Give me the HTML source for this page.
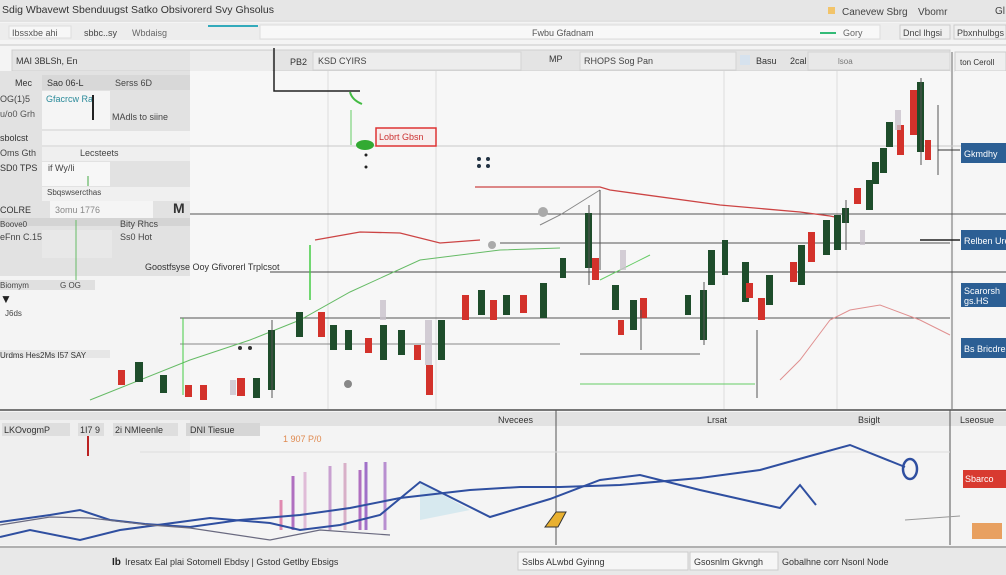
<!DOCTYPE html>
<html><head><meta charset="utf-8"><style>
body{margin:0;width:1006px;height:575px;overflow:hidden;background:#f3f3f3;font-family:"Liberation Sans",sans-serif;}
svg{display:block}
text{font-family:"Liberation Sans",sans-serif;}
</style></head><body>
<svg width="1006" height="575" viewBox="0 0 1006 575">
<rect width="1006" height="575" fill="#f4f4f4"/>
<rect x="0" y="0" width="1006" height="20" fill="#e6e6e6"/>
<text x="2" y="13" font-size="10.5" fill="#333">Sdig Wbavewt Sbenduugst Satko Obsivorerd Svy Ghsolus</text>
<rect x="828" y="7" width="7" height="7" fill="#f2c46a"/>
<text x="842" y="15" font-size="10" fill="#444">Canevew Sbrg</text>
<text x="918" y="15" font-size="10" fill="#444">Vbomr</text>
<text x="995" y="14" font-size="10" fill="#444">Gl</text>
<line x1="0" y1="21" x2="1006" y2="21" stroke="#cfcfcf"/>
<rect x="0" y="23" width="1006" height="17" fill="#ededed"/>
<rect x="9" y="26" width="62" height="12" fill="#f7f7f7" stroke="#ddd"/>
<text x="12" y="36" font-size="9" fill="#555">Ibssxbe ahi</text>
<text x="84" y="36" font-size="9" fill="#444">sbbc..sy</text>
<text x="132" y="36" font-size="9" fill="#666">Wbdaisg</text>
<line x1="208" y1="26" x2="258" y2="26" stroke="#33aabb" stroke-width="2"/>
<rect x="260" y="25" width="620" height="14" fill="#f8f8f8" stroke="#ddd"/>
<text x="532" y="36" font-size="9" fill="#555">Fwbu Gfadnam</text>
<line x1="820" y1="33" x2="836" y2="33" stroke="#33bb77" stroke-width="2"/>
<text x="843" y="36" font-size="9" fill="#666">Gory</text>
<rect x="900" y="25" width="50" height="14" fill="#f0f0f0" stroke="#ccc"/>
<text x="903" y="36" font-size="9" fill="#444">Dncl lhgsi</text>
<rect x="954" y="25" width="52" height="14" fill="#f0f0f0" stroke="#ccc"/>
<text x="957" y="36" font-size="9" fill="#444">Pbxnhulbgs</text>
<line x1="0" y1="45" x2="1006" y2="45" stroke="#c8c8c8"/>
<rect x="12" y="50" width="938" height="21" fill="#e4e4e4" stroke="#cfcfcf"/>
<text x="16" y="64" font-size="9" fill="#333">MAI 3BLSh, En</text>
<rect x="190" y="51" width="82" height="20" fill="#ececec"/>
<text x="290" y="65" font-size="9" fill="#333">PB2</text>
<rect x="313" y="52" width="208" height="18" fill="#ededed" stroke="#d4d4d4"/>
<text x="318" y="64" font-size="9" fill="#444">KSD CYIRS</text>
<text x="549" y="62" font-size="9" fill="#333">MP</text>
<rect x="580" y="52" width="156" height="18" fill="#ededed" stroke="#d4d4d4"/>
<text x="584" y="64" font-size="9" fill="#444">RHOPS Sog Pan</text>
<rect x="740" y="55" width="10" height="10" fill="#d6e2ee"/>
<text x="756" y="64" font-size="9" fill="#333">Basu</text>
<text x="790" y="64" font-size="9" fill="#333">2cal</text>
<rect x="808" y="52" width="142" height="18" fill="#e8e8e8" stroke="#d4d4d4"/>
<text x="838" y="64" font-size="8" fill="#777">lsoa</text>
<rect x="955" y="52" width="51" height="19" fill="#efefef" stroke="#ccc"/>
<text x="960" y="65" font-size="8" fill="#333">ton Ceroll</text>
<rect x="190" y="71" width="760" height="338" fill="#f7f7f7"/>
<rect x="955" y="71" width="51" height="338" fill="#f6f6f6"/>
<line x1="952" y1="52" x2="952" y2="410" stroke="#999" stroke-width="1.5"/>
<g stroke="#dcdcdc">
<line x1="328" y1="71" x2="328" y2="410"/><line x1="436" y1="71" x2="436" y2="410"/>
<line x1="724" y1="71" x2="724" y2="410"/><line x1="837" y1="71" x2="837" y2="410"/>
</g>
<line x1="190" y1="146" x2="1006" y2="146" stroke="#c8c8c8"/>
<line x1="190" y1="214" x2="1006" y2="214" stroke="#555"/>
<line x1="500" y1="243" x2="950" y2="243" stroke="#555"/>
<line x1="270" y1="272" x2="1006" y2="272" stroke="#444"/>
<line x1="180" y1="318" x2="950" y2="318" stroke="#555"/>
<line x1="180" y1="344" x2="560" y2="344" stroke="#888"/>
<rect x="0" y="71" width="190" height="205" fill="#e2e2e2"/>
<rect x="42" y="75" width="148" height="15" fill="#d8d8d8"/>
<text x="15" y="86" font-size="9" fill="#333">Mec</text>
<text x="47" y="86" font-size="9" fill="#333">Sao 06-L</text>
<text x="115" y="86" font-size="9" fill="#444">Serss 6D</text>
<rect x="42" y="91" width="68" height="38" fill="#f5f5f5"/>
<text x="0" y="102" font-size="9" fill="#444">OG(1)5</text>
<text x="46" y="102" font-size="9" fill="#2a8a9a">Gfacrcw Ra</text>
<line x1="93" y1="95" x2="93" y2="120" stroke="#222" stroke-width="2"/>
<text x="0" y="117" font-size="9" fill="#555">u/o0 Grh</text>
<text x="112" y="120" font-size="9" fill="#444">MAdls to siine</text>
<rect x="42" y="131" width="148" height="14" fill="#f3f3f3"/>
<text x="0" y="141" font-size="9" fill="#333">sbolcst</text>
<rect x="42" y="147" width="148" height="14" fill="#efefef"/>
<text x="0" y="156" font-size="9" fill="#444">Oms Gth</text>
<text x="80" y="156" font-size="9" fill="#444">Lecsteets</text>
<text x="0" y="171" font-size="9" fill="#333">SD0 TPS</text>
<rect x="42" y="162" width="68" height="24" fill="#f7f7f7"/>
<text x="48" y="171" font-size="9" fill="#444">if Wy/li</text>
<line x1="88" y1="176" x2="88" y2="186" stroke="#4a4" />
<rect x="42" y="187" width="148" height="14" fill="#f0f0f0"/>
<text x="47" y="195" font-size="8" fill="#444">Sbqswsercthas</text>
<text x="0" y="213" font-size="9" fill="#333">COLRE</text>
<rect x="50" y="201" width="103" height="17" fill="#f5f5f5"/>
<text x="55" y="213" font-size="9" fill="#888">3omu 1776</text>
<text x="173" y="213" font-size="14" font-weight="bold" fill="#333">M</text>
<rect x="0" y="218" width="190" height="8" fill="#d4d4d4"/>
<text x="0" y="227" font-size="8" fill="#444">Boove0</text>
<text x="120" y="227" font-size="9" fill="#444">Bity Rhcs</text>
<text x="0" y="240" font-size="9" fill="#444">eFnn C.15</text>
<text x="120" y="240" font-size="9" fill="#444">Ss0 Hot</text>
<rect x="42" y="230" width="70" height="28" fill="#e8e8e8"/>
<line x1="76" y1="220" x2="76" y2="290" stroke="#6b6" />
<text x="145" y="270" font-size="9" fill="#333">Goostfsyse Ooy Gfivorerl Trplcsot</text>
<rect x="0" y="280" width="95" height="10" fill="#e0e0e0"/>
<text x="0" y="288" font-size="8" fill="#444">Biomym</text>
<text x="60" y="288" font-size="8" fill="#444">G  OG</text>
<text x="0" y="303" font-size="12" fill="#222">&#9660;</text>
<text x="5" y="316" font-size="8" fill="#444">J6ds</text>
<rect x="0" y="350" width="110" height="8" fill="#e6e6e6"/>
<text x="0" y="358" font-size="8" fill="#333">Urdms Hes2Ms I57 SAY</text>
<path d="M274 48 V91 H360" stroke="#222" stroke-width="1.5" fill="none"/>
<path d="M350 92 Q352 100 362 104" stroke="#4b4" stroke-width="2" fill="none"/>
<line x1="351" y1="110" x2="351" y2="145" stroke="#6c6"/>
<ellipse cx="365" cy="145" rx="9" ry="5" fill="#3a3"/>
<rect x="376" y="128" width="60" height="18" fill="#f7eeee" stroke="#d33" stroke-width="1.5"/>
<text x="379" y="140" font-size="9" fill="#c33">Lobrt Gbsn</text>
<circle cx="366" cy="155" r="1.5" fill="#222"/><circle cx="366" cy="167" r="1.5" fill="#222"/>
<circle cx="479" cy="159" r="2" fill="#234"/><circle cx="488" cy="159" r="2" fill="#234"/>
<circle cx="479" cy="166" r="2" fill="#234"/><circle cx="488" cy="166" r="2" fill="#234"/>
<path d="M475 187 L600 187 L610 190 L720 205 L800 212 L830 216 L840 218" stroke="#c44" stroke-width="1.3" fill="none"/>
<path d="M315 240 L360 232 L400 233 L440 243 L480 240" stroke="#c44" stroke-width="1.3" fill="none"/>
<path d="M600 190 L560 215 L540 225" stroke="#888" fill="none"/>
<circle cx="543" cy="212" r="5" fill="#aaa"/>
<circle cx="492" cy="245" r="4" fill="#aaa"/>
<path d="M780 380 L800 360 L815 340 L830 320 L850 310 L880 305 L920 320 L950 335" stroke="#e09090" stroke-width="1" fill="none"/>
<line x1="580" y1="384" x2="755" y2="384" stroke="#6c6"/>
<line x1="580" y1="354" x2="700" y2="354" stroke="#666"/>
<line x1="600" y1="280" x2="650" y2="255" stroke="#6c6"/>
<path d="M90 400 L190 360 L250 340 L300 320 L350 292 L420 260 L500 250 L560 248" stroke="#6b6" stroke-width="1" fill="none"/>
<line x1="310" y1="245" x2="310" y2="300" stroke="#4c4" stroke-width="1.5"/>
<line x1="183" y1="318" x2="183" y2="395" stroke="#4c4"/>
<circle cx="240" cy="348" r="2" fill="#333"/><circle cx="250" cy="348" r="2" fill="#333"/>
<circle cx="348" cy="384" r="4" fill="#888"/>
<g>
<g fill="#1e4d2b">
<rect x="135" y="362" width="8" height="20"/><rect x="160" y="375" width="7" height="18"/>
<rect x="253" y="378" width="7" height="20"/><rect x="268" y="330" width="7" height="60"/>
<rect x="296" y="312" width="7" height="25"/><rect x="330" y="325" width="7" height="25"/>
<rect x="345" y="330" width="7" height="20"/><rect x="380" y="325" width="7" height="35"/>
<rect x="398" y="330" width="7" height="25"/><rect x="438" y="320" width="7" height="40"/>
<rect x="478" y="290" width="7" height="25"/><rect x="503" y="295" width="7" height="20"/>
<rect x="540" y="283" width="7" height="35"/><rect x="585" y="213" width="7" height="55"/>
<rect x="612" y="285" width="7" height="25"/><rect x="630" y="300" width="7" height="30"/>
<rect x="700" y="290" width="7" height="50"/><rect x="708" y="250" width="7" height="35"/>
<rect x="742" y="262" width="7" height="40"/><rect x="766" y="275" width="7" height="30"/>
<rect x="798" y="245" width="7" height="40"/><rect x="823" y="220" width="7" height="35"/>
<rect x="834" y="215" width="7" height="35"/><rect x="842" y="208" width="7" height="15"/>
<rect x="866" y="180" width="7" height="30"/><rect x="872" y="162" width="7" height="22"/>
<rect x="880" y="148" width="7" height="25"/><rect x="886" y="122" width="7" height="25"/>
<rect x="917" y="82" width="7" height="70"/><rect x="560" y="258" width="6" height="20"/>
<rect x="685" y="295" width="6" height="20"/><rect x="722" y="240" width="6" height="35"/>
</g>
<g fill="#d3322b">
<rect x="118" y="370" width="7" height="15"/><rect x="185" y="385" width="7" height="12"/>
<rect x="200" y="385" width="7" height="15"/><rect x="237" y="378" width="8" height="18"/>
<rect x="318" y="312" width="7" height="25"/><rect x="365" y="338" width="7" height="15"/>
<rect x="414" y="345" width="7" height="15"/><rect x="426" y="365" width="7" height="30"/>
<rect x="462" y="295" width="7" height="25"/><rect x="490" y="300" width="7" height="20"/>
<rect x="520" y="295" width="7" height="18"/><rect x="592" y="258" width="7" height="22"/>
<rect x="640" y="298" width="7" height="20"/><rect x="746" y="283" width="7" height="15"/>
<rect x="758" y="298" width="7" height="22"/><rect x="790" y="262" width="7" height="20"/>
<rect x="808" y="232" width="7" height="30"/><rect x="854" y="188" width="7" height="16"/>
<rect x="897" y="125" width="7" height="30"/><rect x="910" y="90" width="7" height="45"/>
<rect x="925" y="140" width="6" height="20"/><rect x="618" y="320" width="6" height="15"/>
</g>
<g fill="#c9c2cc" opacity=".8">
<rect x="425" y="320" width="7" height="45"/><rect x="620" y="250" width="6" height="20"/>
<rect x="895" y="110" width="6" height="20"/><rect x="860" y="230" width="5" height="15"/>
<rect x="230" y="380" width="6" height="15"/><rect x="380" y="300" width="6" height="20"/>
</g>
<g stroke="#555" stroke-width="1">
<line x1="272" y1="320" x2="272" y2="398"/><line x1="589" y1="205" x2="589" y2="285"/>
<line x1="704" y1="282" x2="704" y2="345"/><line x1="921" y1="78" x2="921" y2="165"/>
<line x1="757" y1="330" x2="757" y2="398"/><line x1="641" y1="310" x2="641" y2="350"/>
<line x1="938" y1="105" x2="938" y2="175"/><line x1="846" y1="200" x2="846" y2="250"/>
<line x1="600" y1="190" x2="600" y2="270"/>
</g>
</g>
<path d="M938 150 L960 150" stroke="#333"/><path d="M920 240 L960 240" stroke="#222" stroke-width="1.5"/>
<g fill="#2c5f94">
<rect x="961" y="143" width="45" height="20"/><rect x="961" y="230" width="45" height="20"/>
<rect x="961" y="283" width="45" height="24"/><rect x="961" y="338" width="45" height="20"/>
</g>
<g fill="#fff" font-size="9">
<text x="964" y="157">Gkmdhy</text><text x="964" y="244">Relben Ure</text>
<text x="964" y="294">Scarorsh</text><text x="964" y="304">gs.HS</text><text x="964" y="352">Bs Bricdre</text>
</g>
<line x1="0" y1="410" x2="1006" y2="410" stroke="#777" stroke-width="2"/>
<rect x="0" y="412" width="1006" height="14" fill="#e2e2e2"/>
<text x="498" y="423" font-size="9" fill="#333">Nvecees</text>
<text x="707" y="423" font-size="9" fill="#333">Lrsat</text>
<text x="858" y="423" font-size="9" fill="#333">Bsiglt</text>
<text x="960" y="423" font-size="9" fill="#333">Lseosue</text>
<line x1="556" y1="410" x2="556" y2="545" stroke="#555"/>
<line x1="950" y1="410" x2="950" y2="545" stroke="#555"/>
<rect x="0" y="420" width="190" height="125" fill="#efefef"/>
<rect x="2" y="423" width="68" height="13" fill="#dedede"/><text x="4" y="433" font-size="9" fill="#333">LKOvogmP</text>
<rect x="78" y="423" width="26" height="13" fill="#dedede"/><text x="80" y="433" font-size="9" fill="#333">1I7 9</text>
<rect x="113" y="423" width="65" height="13" fill="#dedede"/><text x="115" y="433" font-size="9" fill="#333">2i NMIeenle</text>
<rect x="186" y="423" width="74" height="13" fill="#d6d6d6"/><text x="190" y="433" font-size="9" fill="#333">DNI Tiesue</text>
<line x1="88" y1="436" x2="88" y2="456" stroke="#b22" stroke-width="2"/>
<text x="283" y="442" font-size="9" fill="#e08a50">1 907 P/0</text>
<line x1="140" y1="452" x2="950" y2="452" stroke="#ddd"/>
<g stroke-width="3">
<line x1="293" y1="476" x2="293" y2="530" stroke="#b06fc0"/><line x1="305" y1="472" x2="305" y2="530" stroke="#e0bcd8"/>
<line x1="330" y1="466" x2="330" y2="530" stroke="#c8a0d0"/><line x1="345" y1="463" x2="345" y2="530" stroke="#d8b0c8"/>
<line x1="360" y1="470" x2="360" y2="530" stroke="#b06fc0"/><line x1="366" y1="462" x2="366" y2="530" stroke="#a070c8"/>
<line x1="385" y1="462" x2="385" y2="530" stroke="#b88fd0"/><line x1="281" y1="500" x2="281" y2="530" stroke="#e08ab0"/>
</g>
<path d="M420 482 L470 510 L420 520 Z" fill="#cfe6ee" opacity=".8"/>
<path d="M0 522 L50 515 L80 510 L110 520 L145 524 L190 527 L240 520 L300 515 L350 508 L400 498 L470 490 L520 487 L560 487 L620 485 L700 478 L760 470 L810 456 L850 445 L905 467" stroke="#2f4fa0" stroke-width="2" fill="none"/>
<ellipse cx="910" cy="469" rx="7" ry="10" fill="none" stroke="#2f4fa0" stroke-width="2.5"/>
<path d="M0 537 L30 530 L80 540 L120 530 L210 518 L270 523 L300 530 L340 525 L380 515 L420 482 L490 517 L550 499 L600 480 L640 475 L700 490 L780 508 L800 485 L816 505" stroke="#2f4fa0" stroke-width="2" fill="none"/>
<path d="M0 525 L50 517 L90 518 L150 525 L190 528 L270 540 L320 530 L390 535" stroke="#6a6a80" stroke-width="1.2" fill="none"/>
<path d="M545 527 L556 512 L566 512 L558 527 Z" fill="#e8b030" stroke="#333"/>
<rect x="963" y="470" width="43" height="18" fill="#d83a30"/>
<text x="965" y="482" font-size="9" fill="#fff">Sbarco</text>
<rect x="972" y="523" width="30" height="16" fill="#e8a060"/>
<line x1="905" y1="520" x2="960" y2="516" stroke="#999"/>
<line x1="0" y1="547" x2="1006" y2="547" stroke="#999" stroke-width="1.5"/>
<rect x="0" y="548" width="1006" height="27" fill="#e8e8e8"/>
<text x="112" y="565" font-size="10" fill="#222" font-weight="bold">Ib</text>
<text x="125" y="565" font-size="9" fill="#333">Iresatx Eal plai Sotomell Ebdsy | Gstod Getlby Ebsigs</text>
<rect x="518" y="552" width="170" height="18" fill="#f6f6f6" stroke="#ccc"/>
<text x="522" y="565" font-size="9" fill="#333">Sslbs  ALwbd Gyinng</text>
<rect x="690" y="552" width="88" height="18" fill="#f6f6f6" stroke="#ccc"/>
<text x="694" y="565" font-size="9" fill="#333">Gsosnlm Gkvngh</text>
<text x="782" y="565" font-size="9" fill="#333">Gobalhne corr Nsonl Node</text>
</svg>
</body></html>
